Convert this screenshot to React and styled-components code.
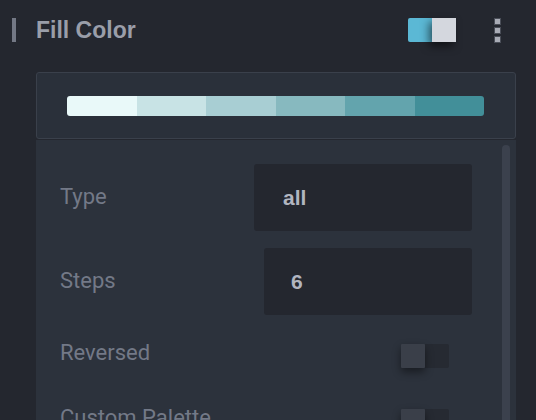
import React from 'react';
import styled, { createGlobalStyle } from 'styled-components';

const GlobalStyle = createGlobalStyle`
  html, body {
    margin: 0;
    padding: 0;
    background: #24272f;
    font-family: Roboto, "Liberation Sans", sans-serif;
    overflow: hidden;
  }
`;

const palette = ['#e9f9f9', '#c8e3e5', '#a8ced3', '#87b9bf', '#63a4ad', '#428f99'];

const Page = styled.div`
  width: 536px;
  height: 420px;
  overflow: hidden;
`;

const Header = styled.div`
  display: flex;
  align-items: center;
  height: 60px;
  padding-left: 12px;
`;

const Marker = styled.div`
  width: 4px;
  height: 24px;
  background: #737885;
  margin-right: 20px;
`;

const Title = styled.div`
  flex: 1;
  font-family: "Liberation Sans", Arial, sans-serif;
  font-size: 23px;
  font-weight: 700;
  color: #9a9ea9;
`;

const HeaderToggle = styled.div`
  display: flex;
  width: 48px;
  height: 24px;
  margin-right: 39px;
`;

const Half = styled.div`
  width: 24px;
  height: 24px;
  background: ${p => p.$bg};
  border-radius: ${p => (p.$left ? '2px 0 0 2px' : '0')};
  box-shadow: ${p => (p.$knob ? '-3px 4px 8px rgba(0,0,0,0.55)' : 'none')};
  position: relative;
`;

const Dots = styled.div`
  display: flex;
  flex-direction: column;
  gap: 4px;
  margin-right: 36px;
`;

const Dot = styled.span`
  width: 5px;
  height: 5px;
  background: #a9acb6;
  outline: 1px solid #4a4e58;
`;

const Panels = styled.div`
  margin: 12px 0 0 36px;
  width: 480px;
`;

const PreviewPanel = styled.div`
  height: 67px;
  box-sizing: border-box;
  background: #2a303a;
  border: 1px solid #3a404b;
  border-radius: 3px;
  padding: 23px 31px 0 30px;
`;

const Scale = styled.div`
  display: flex;
  height: 20px;
  border-radius: 3px;
  overflow: hidden;
`;

const Swatch = styled.div`
  flex: 1;
  background: ${p => p.$color};
`;

const Settings = styled.div`
  position: relative;
  margin-top: 1px;
  height: 290px;
  background: #2c323c;
  padding: 24px 44px 0 24px;
  box-sizing: border-box;
  display: flex;
  flex-direction: column;
  gap: 17px;
`;

const Scrollbar = styled.div`
  position: absolute;
  top: 5px;
  right: 6px;
  width: 8px;
  bottom: 0;
  border-radius: 4px;
  background: #3b414d;
`;

const Row = styled.div`
  display: flex;
  align-items: center;
  justify-content: space-between;
  height: ${p => p.$height}px;
  flex-shrink: 0;
`;

const Label = styled.div`
  font-size: 22px;
  color: #737987;
  padding-bottom: ${p => p.$lift || 3}px;
`;

const Field = styled.div`
  width: ${p => p.$width}px;
  height: 67px;
  box-sizing: border-box;
  background: #24272f;
  border-radius: 3px;
  display: flex;
  align-items: center;
  padding-left: ${p => p.$pad}px;
  font-family: "Liberation Sans", Arial, sans-serif;
  font-size: 21px;
  font-weight: 700;
  color: #b1b5c0;
`;

const Switch = styled.div`
  display: flex;
  width: 48px;
  height: 24px;
  margin-right: 23px;
`;

const Knob = styled.div`
  width: 24px;
  height: 24px;
  background: #3a3f49;
  border-radius: 1px;
  box-shadow: 0 4px 8px rgba(0,0,0,0.45);
  position: relative;
  z-index: 1;
`;

const Track = styled.div`
  width: 24px;
  height: 24px;
  background: #262a32;
  border-radius: 0 2px 2px 0;
`;

const Toggle = () => (
  <Switch>
    <Knob />
    <Track />
  </Switch>
);

export default function App() {
  return (
    <Page>
      <GlobalStyle />
      <Header>
        <Marker />
        <Title>Fill Color</Title>
        <HeaderToggle>
          <Half $bg="#5bb8d5" $left />
          <Half $bg="#d4d7de" $knob />
        </HeaderToggle>
        <Dots>
          <Dot />
          <Dot />
          <Dot />
        </Dots>
      </Header>
      <Panels>
        <PreviewPanel>
          <Scale>
            {palette.map(c => <Swatch key={c} $color={c} />)}
          </Scale>
        </PreviewPanel>
        <Settings>
          <Scrollbar />
          <Row $height={67}>
            <Label>Type</Label>
            <Field $width={218} $pad={29}>all</Field>
          </Row>
          <Row $height={67}>
            <Label>Steps</Label>
            <Field $width={208} $pad={27}>6</Field>
          </Row>
          <Row $height={48}>
            <Label $lift={8}>Reversed</Label>
            <Toggle />
          </Row>
          <Row $height={48}>
            <Label $lift={8}>Custom Palette</Label>
            <Toggle />
          </Row>
        </Settings>
      </Panels>
    </Page>
  );
}
